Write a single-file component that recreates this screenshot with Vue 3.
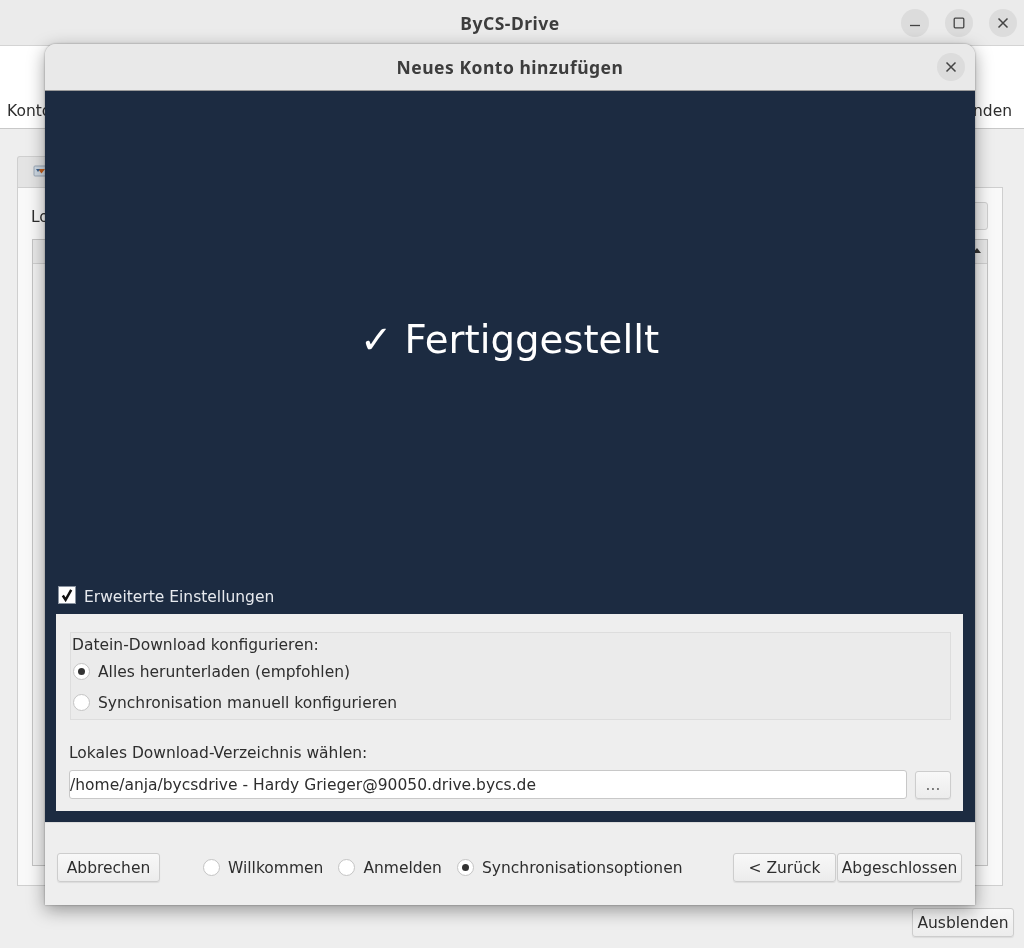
<script setup>
const steps = [
  { label: 'Willkommen', checked: false },
  { label: 'Anmelden', checked: false },
  { label: 'Synchronisationsoptionen', checked: true },
]
</script>

<template>
  <div class="desktop">
    <header class="titlebar">
      <span class="spacer"></span>
      <span class="title">ByCS-Drive</span>
      <div class="win-buttons">
        <span class="win-btn">
          <svg width="12" height="12" viewBox="0 0 12 12"><path d="M1 8.5h10" stroke="#444" stroke-width="1.3" fill="none"/></svg>
        </span>
        <span class="win-btn">
          <svg width="12" height="12" viewBox="0 0 12 12"><rect x="1.2" y="1.2" width="9.6" height="9.6" rx="1" stroke="#444" stroke-width="1.3" fill="none"/></svg>
        </span>
        <span class="win-btn">
          <svg width="12" height="12" viewBox="0 0 12 12"><path d="M1.5 1.5l9 9M10.5 1.5l-9 9" stroke="#444" stroke-width="1.5" fill="none"/></svg>
        </span>
      </div>
    </header>
    <nav class="toolbar">
      <span>Konto</span>
      <span>Beenden</span>
    </nav>
    <main class="content">
      <div class="tab">
        <svg width="14" height="14" viewBox="0 0 14 14"><rect x="1" y="2" width="12" height="10" rx="1" fill="#ced8e2" stroke="#9aa7b5"/><path d="M5 5h7l-3.500 4.500z" fill="#c2601f"/><path d="M3 5h4l-2 3z" fill="#3b5f8a"/></svg>
      </div>
      <section class="panel">
        <div class="panel-top">
          <span class="panel-label">Lokal</span>
          <span class="ghost-button"></span>
        </div>
        <div class="tree">
          <div class="tree-head"><span class="arrow"></span></div>
        </div>
      </section>
      <div class="hide-row"><button class="btn">Ausblenden</button></div>
    </main>

    <div class="dialog">
      <header class="dlg-title">
        <span class="spacer"></span>
        <span class="title">Neues Konto hinzufügen</span>
        <span class="dlg-close-wrap">
          <span class="win-btn">
            <svg width="12" height="12" viewBox="0 0 12 12"><path d="M1.500 1.500l9 9M10.500 1.500l-9 9" stroke="#444" stroke-width="1.5" fill="none"/></svg>
          </span>
        </span>
      </header>
      <div class="dlg-body">
        <div class="done">✓ Fertiggestellt</div>
        <label class="adv">
          <span class="box">
            <svg width="14" height="14" viewBox="0 0 14 14"><path d="M2.800 7.500l2.800 4.300L11.200 1.800" stroke="#111" stroke-width="2.500" fill="none"/></svg>
          </span>
          Erweiterte Einstellungen
        </label>
        <div class="adv-panel">
          <fieldset class="group">
            <div class="group-title">Datein-Download konfigurieren:</div>
            <div class="radio-row"><span class="radio on"></span>Alles herunterladen (empfohlen)</div>
            <div class="radio-row"><span class="radio"></span>Synchronisation manuell konfigurieren</div>
          </fieldset>
          <div class="dir-label">Lokales Download-Verzeichnis wählen:</div>
          <div class="dir-row">
            <div class="input">/home/anja/bycsdrive - Hardy Grieger@90050.drive.bycs.de</div>
            <button class="btn dots">...</button>
          </div>
        </div>
      </div>
      <footer class="dlg-foot">
        <button class="btn cancel">Abbrechen</button>
        <div class="steps">
          <span v-for="s in steps" :key="s.label" class="step">
            <span class="radio" :class="{ on: s.checked }"></span>{{ s.label }}
          </span>
        </div>
        <div class="nav-btns">
          <button class="btn back">&lt; Zurück</button>
          <button class="btn finish">Abgeschlossen</button>
        </div>
      </footer>
    </div>
  </div>
</template>

<style>
html, body { margin: 0; background: #eeeeee; }
</style>

<style scoped>
.desktop {
  position: relative;
  width: 1024px;
  height: 948px;
  overflow: hidden;
  background: #eeeeee;
  color: #2e2e2e;
  font-family: "DejaVu Sans", sans-serif;
  font-size: 15.5px;
  display: flex;
  flex-direction: column;
  filter: blur(0.35px);
}
.titlebar {
  height: 45px;
  flex: none;
  display: flex;
  align-items: center;
  background: #ebebeb;
  border-bottom: 1px solid #d4d4d4;
}
.spacer { flex: 1; }
.title {
  font-family: "Noto Sans", "Open Sans", sans-serif;
  font-weight: 700;
  font-size: 17.5px;
  letter-spacing: 0.5px;
  color: #3d3d3d;
}
.win-buttons {
  flex: 1;
  display: flex;
  justify-content: flex-end;
  gap: 16px;
  padding-right: 4px;
}
.win-buttons .win-btn:last-child { margin-right: 3px; }
.win-btn {
  width: 28px;
  height: 28px;
  border-radius: 50%;
  background: #dcdcdc;
  display: flex;
  align-items: center;
  justify-content: center;
}
.toolbar {
  height: 83px;
  flex: none;
  box-sizing: border-box;
  background: #fff;
  border-bottom: 1px solid #c8c8c8;
  display: flex;
  justify-content: space-between;
  align-items: flex-end;
  padding: 0 12px 8px 7px;
}
.content {
  flex: 1;
  padding: 27px 21px 0 17px;
  display: flex;
  flex-direction: column;
}
.tab {
  width: 120px;
  height: 31px;
  box-sizing: border-box;
  border: 1px solid #cfcfcf;
  border-bottom: 0;
  border-radius: 3px 3px 0 0;
  background: #e4e4e4;
  padding: 7px 0 0 15px;
}
.panel {
  height: 699px;
  box-sizing: border-box;
  border: 1px solid #cfcfcf;
  background: #f9f9f9;
  padding: 14px 14px 19px 13px;
  display: flex;
  flex-direction: column;
  gap: 9px;
}
.panel-top {
  display: flex;
  justify-content: space-between;
  align-items: center;
  height: 28px;
}
.panel-label { padding-top: 1px; }
.ghost-button {
  width: 120px;
  height: 28px;
  box-sizing: border-box;
  border: 1px solid #cfcfcf;
  border-radius: 3px;
  background: #efefef;
}
.tree {
  flex: 1;
  margin-left: 1px;
  border: 1px solid #c4c4c4;
  background: #f2f2f2;
}
.tree-head {
  height: 23px;
  border-bottom: 1px solid #d0d0d0;
  background: #e9e9e9;
  position: relative;
}
.arrow {
  position: absolute;
  right: 6px;
  top: 8px;
  border: 4px solid transparent;
  border-top: 0;
  border-bottom: 5px solid #333;
}
.hide-row {
  display: flex;
  justify-content: flex-end;
  margin: 22px -11px 0 0;
}
.btn {
  box-sizing: border-box;
  height: 29px;
  padding: 1px 0 0;
  font: inherit;
  color: #2e2e2e;
  background: linear-gradient(#f8f8f8, #ececec);
  border: 1px solid #cdcdcd;
  border-radius: 3px;
  box-shadow: 0 1px 1px rgba(0, 0, 0, 0.08);
}
.hide-row .btn { width: 102px; }

.dialog {
  position: absolute;
  left: 45px;
  top: 44px;
  width: 930px;
  height: 861px;
  display: flex;
  flex-direction: column;
  background: #eeeeee;
  border-radius: 11px 11px 0 0;
  box-shadow: 0 0 2px rgba(0, 0, 0, 0.4), 0 5px 18px rgba(0, 0, 0, 0.38);
}
.dlg-title {
  height: 47px;
  box-sizing: border-box;
  flex: none;
  display: flex;
  align-items: center;
  background: #e9e9e9;
  border-radius: 11px 11px 0 0;
  border-bottom: 1px solid #9a9a9a;
}
.dlg-close-wrap {
  flex: 1;
  display: flex;
  justify-content: flex-end;
}
.dlg-close-wrap .win-btn { margin-right: 10px; }
.dlg-body {
  height: 731px;
  flex: none;
  box-sizing: border-box;
  background: #1c2b41;
  padding: 0 12px 11px 11px;
  display: flex;
  flex-direction: column;
}
.done {
  height: 495px;
  box-sizing: border-box;
  padding-top: 1px;
  flex: none;
  display: flex;
  align-items: center;
  justify-content: center;
  color: #fff;
  font-size: 38.7px;
}
.adv {
  height: 29px;
  margin-left: 2px;
  display: flex;
  align-items: flex-start;
  gap: 8px;
  line-height: 22px;
  color: #e6e9ee;
}
.box {
  width: 18px;
  height: 18px;
  box-sizing: border-box;
  border: 1px solid #8a93a0;
  background: #fff;
  display: flex;
  align-items: center;
  justify-content: center;
}
.adv-panel {
  flex: 1;
  background: #eeeeee;
  padding: 18px 12px 12px 13px;
  display: flex;
  flex-direction: column;
}
.group {
  margin: 0 0 0 1px;
  padding: 2px 0 0 2px;
  height: 88px;
  box-sizing: border-box;
  border: 1px solid #dddddd;
  background: #ebebeb;
  display: flex;
  flex-direction: column;
}
.group-title { height: 21px; line-height: 20px; margin-left: -1px; }
.radio-row {
  height: 31px;
  display: flex;
  align-items: center;
  gap: 8px;
}
.radio {
  width: 17px;
  height: 17px;
  box-sizing: border-box;
  border: 1px solid #c4c4c4;
  border-radius: 50%;
  background: #fff;
  display: inline-flex;
  align-items: center;
  justify-content: center;
  flex: none;
}
.radio.on::after {
  content: "";
  width: 7px;
  height: 7px;
  border-radius: 50%;
  background: #333;
}
.dir-label {
  height: 20px;
  margin-top: 23px;
  line-height: 20px;
}
.dir-row {
  display: flex;
  gap: 8px;
  margin-top: 7px;
  align-items: center;
}
.input {
  flex: 1;
  height: 29px;
  box-sizing: border-box;
  background: #fff;
  border: 1px solid #c8c8c8;
  border-radius: 3px;
  line-height: 29px;
}
.dots { width: 36px; height: 28px; color: #666; flex: none; }
.dlg-foot {
  flex: 1;
  display: flex;
  align-items: center;
  padding: 6px 13px 0 12px;
  border-top: 1px solid #dcdcdc;
}
.cancel { width: 103px; }
.steps {
  display: flex;
  gap: 15px;
  margin: 1px 0 0 43px;
}
.step {
  display: inline-flex;
  align-items: center;
  gap: 8px;
}
.nav-btns {
  margin-left: auto;
  display: flex;
  gap: 1px;
}
.back { width: 103px; }
.finish { width: 125px; }
</style>
